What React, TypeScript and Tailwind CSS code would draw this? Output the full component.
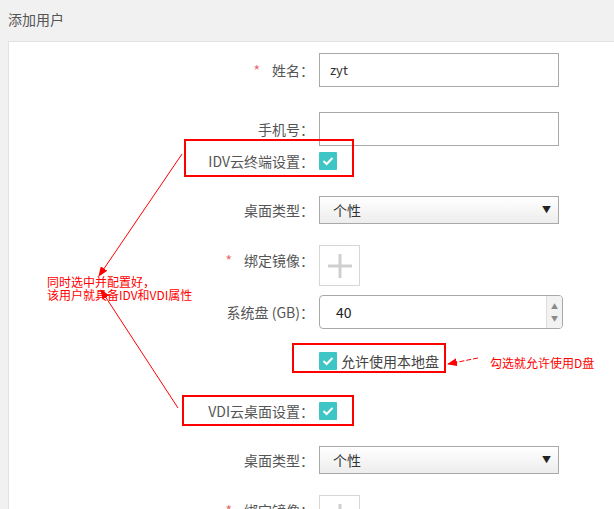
import type { ReactNode } from "react";

const FONT = { fontFamily: '"Microsoft YaHei", "Noto Sans CJK SC", "Noto Sans", sans-serif' };
const MARK = { fontFamily: '"SimSun", "Noto Sans CJK SC", sans-serif' };

function Row({
  label,
  required,
  top,
  alignTop,
  children,
}: {
  label: string;
  required?: boolean;
  top: string;
  alignTop?: boolean;
  children: ReactNode;
}) {
  return (
    <div className={`flex ${alignTop ? "items-start" : "items-center"} ${top}`}>
      <div
        className={`w-[310px] shrink-0 pr-[5px] text-right text-[14px] leading-[18px] text-[#555] ${
          alignTop ? "pt-[6px]" : ""
        }`}
      >
        {required && <span className="mr-[12px] text-[#e96a6a]">*</span>}
        {label}：
      </div>
      {children}
    </div>
  );
}

function Check() {
  return (
    <span className="flex h-[18px] w-[18px] items-center justify-center rounded-[1px] bg-[#3ec6c6]">
      <svg width="12" height="10" viewBox="0 0 12 10">
        <path d="M1.5 5 L4.6 8 L10.5 2" fill="none" stroke="white" strokeWidth="2" />
      </svg>
    </span>
  );
}

function Select() {
  return (
    <div className="flex h-[28px] w-[240px] items-center justify-between border border-[#a9a9a9] bg-gradient-to-b from-white to-[#ededed] pl-[13px] pr-[7px] text-[14px] text-[#333]">
      <span>个性</span>
      <span className="text-[9px] text-[#222]">▼</span>
    </div>
  );
}

function AddImage() {
  return (
    <div className="flex h-[41px] w-[41px] items-center justify-center border border-[#d6d6d6] bg-white">
      <svg width="26" height="26" viewBox="0 0 26 26">
        <path d="M13 1 V25 M1 13 H25" stroke="#cfcfcf" strokeWidth="3" />
      </svg>
    </div>
  );
}

export default function App() {
  return (
    <div className="relative h-[509px] w-[614px] overflow-hidden bg-[#f1f1f1]" style={FONT}>
      <div className="h-[41px] pl-[8px] pt-[9px] text-[14px] leading-[20px] text-[#555]">添加用户</div>

      <div className="ml-[8px] h-[468px] border-l border-t border-[#e2e2e2] bg-white">
        <Row label="姓名" required top="mt-[11px]">
          <div className="flex h-[34px] w-[240px] items-center border border-[#a9a9a9] pl-[10px] text-[13px] text-[#333]">
            zyt
          </div>
        </Row>
        <Row label="手机号" top="mt-[25px]">
          <div className="h-[34px] w-[240px] border border-[#a9a9a9]" />
        </Row>
        <Row label="IDV云终端设置" top="mt-[6px]">
          <Check />
        </Row>
        <Row label="桌面类型" top="mt-[26px]">
          <Select />
        </Row>
        <Row label="绑定镜像" required alignTop top="mt-[21px]">
          <AddImage />
        </Row>
        <Row label="系统盘 (GB)" top="mt-[9px]">
          <div className="flex h-[34px] w-[244px] items-center justify-between overflow-hidden rounded-[4px] border border-[#a9a9a9] text-[14px] text-[#222]">
            <span className="pl-[16px]">40</span>
            <div className="flex h-full w-[16px] flex-col items-center justify-center gap-[5px] border-l border-[#dcdcdc] bg-[#f2f2f2] text-[7px] leading-[7px] text-[#8a8a8a]">
              <span>▲</span>
              <span>▼</span>
            </div>
          </div>
        </Row>
        <div className="mt-[23px] flex items-center pl-[310px]">
          <Check />
          <span className="ml-[4px] text-[14px] leading-[18px] text-[#444]">允许使用本地盘</span>
        </div>
        <Row label="VDI云桌面设置" top="mt-[32px]">
          <Check />
        </Row>
        <Row label="桌面类型" top="mt-[26px]">
          <Select />
        </Row>
        <Row label="绑定镜像" required alignTop top="mt-[21px]">
          <AddImage />
        </Row>
      </div>

      {/* annotations */}
      <div className="absolute left-[184px] top-[139px] h-[38px] w-[170px] border-2 border-[#ff0000]" />
      <div className="absolute left-[292px] top-[343px] h-[30px] w-[154px] border-2 border-[#ff0000]" />
      <div className="absolute left-[182px] top-[395px] h-[31px] w-[172px] border-2 border-[#ff0000]" />

      <div className="absolute left-[47px] top-[275px] text-[12px] leading-[13px] text-[#ff0000]" style={MARK}>
        <div>同时选中并配置好，</div>
        <div>该用户就具备IDV和VDI属性</div>
      </div>
      <div className="absolute left-[490px] top-[355px] text-[12px] leading-[16px] text-[#ff0000]" style={MARK}>
        勾选就允许使用D盘
      </div>

      <svg className="pointer-events-none absolute left-0 top-0" width="614" height="509">
        <defs>
          <marker id="head" markerWidth="10" markerHeight="8" refX="9" refY="4" orient="auto" markerUnits="userSpaceOnUse">
            <path d="M0 0 L10 4 L0 8 Z" fill="#ff0000" />
          </marker>
        </defs>
        <line x1="182" y1="154" x2="99" y2="276" stroke="#ff0000" strokeWidth="1" markerEnd="url(#head)" />
        <line x1="178" y1="408" x2="101" y2="290" stroke="#ff0000" strokeWidth="1" markerEnd="url(#head)" />
        <line x1="478" y1="358" x2="448" y2="364" stroke="#ff0000" strokeWidth="1" strokeDasharray="5 2" markerEnd="url(#head)" />
      </svg>
    </div>
  );
}
